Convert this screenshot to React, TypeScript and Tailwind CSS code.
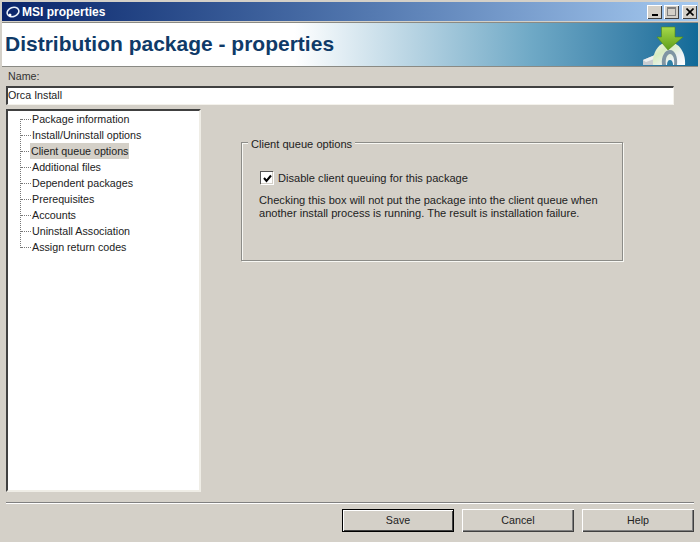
const items = [
  "Package information",
  "Install/Uninstall options",
  "Client queue options",
  "Additional files",
  "Dependent packages",
  "Prerequisites",
  "Accounts",
  "Uninstall Association",
  "Assign return codes",
];

function Btn({ label, primary }: { label: string; primary?: boolean }) {
  return (
    <div
      className={
        primary
          ? "w-[112px] h-[23px] flex items-center justify-center border border-black bg-[#d4d0c8] shadow-[inset_1px_1px_0_#ffffff,inset_-1px_-1px_0_#404040]"
          : "w-[112px] h-[23px] flex items-center justify-center bg-[#d4d0c8] shadow-[inset_1px_1px_0_#ffffff,inset_-1px_-1px_0_#404040,inset_-2px_-2px_0_#808080]"
      }
    >
      <span className="mt-[-1px]">{label}</span>
    </div>
  );
}

function CapBtn({ children }: { children: React.ReactNode }) {
  return (
    <div className="w-[15px] h-[14px] bg-[#d4d0c8] shadow-[inset_1px_1px_0_#ffffff,inset_-1px_-1px_0_#404040] flex items-center justify-center">
      {children}
    </div>
  );
}

function PackageIcon() {
  return (
    <svg width="44" height="40" viewBox="0 0 44 40">
      <defs>
        <linearGradient id="disc" x1="0" y1="0" x2="1" y2="1">
          <stop offset="0" stopColor="#f4f4f0" />
          <stop offset="0.35" stopColor="#d8ecc0" />
          <stop offset="0.7" stopColor="#eef2f4" />
          <stop offset="1" stopColor="#ffffff" />
        </linearGradient>
        <linearGradient id="arr" x1="0" y1="0" x2="0" y2="1">
          <stop offset="0" stopColor="#a6d94a" />
          <stop offset="1" stopColor="#5f9e1a" />
        </linearGradient>
      </defs>
      <path d="M0 34 L12 29 L15 31 L15 39 L0 39 Z" fill="#c8ccd0" />
      <path d="M0 34 L12 29 L14 32 L3 36 Z" fill="#eef0f0" />
      <path d="M10 39 C9 26 16 16 26 16 C36 16 43 27 42 39 Z" fill="url(#disc)" />
      <path d="M19 39 C18 30 22 24 27 24 C32 24 35 31 34 39 L31 39 C32 33 30 28 27 28 C24 28 22 33 23 39 Z" fill="#7f95a3" />
      <path d="M24 39 C24 36 25 34 27 34 C29 34 30 36 30 39 Z" fill="#2f7fa5" />
      <path d="M18.5 1 L32 1 L32 11 L40 11 L25 24 L14 11 L18.5 11 Z" fill="url(#arr)" stroke="#4f8a16" strokeWidth="0.6" />
    </svg>
  );
}

export default function App() {
  return (
    <div className="w-[700px] h-[542px] bg-[#d4d0c8] flex flex-col text-[10.7px] leading-[14px] text-[#222] font-['Liberation_Sans',Arial,sans-serif] overflow-hidden">
      <div className="mt-[2px] mx-[2px] h-[19px] shrink-0 flex items-center justify-between pl-[4px] pr-[1px] bg-gradient-to-r from-[#0a246a] via-[#4f74ac] to-[#a6caf0]">
        <div className="flex items-center gap-[2px] text-white font-bold text-[12px]">
          <svg width="14" height="14" viewBox="0 0 14 14">
            <ellipse cx="7" cy="7" rx="6" ry="4.5" fill="none" stroke="#e8eef8" strokeWidth="1.6" transform="rotate(-20 7 7)" />
            <circle cx="4" cy="10" r="1.5" fill="#ffffff" />
          </svg>
          <span>MSI properties</span>
        </div>
        <div className="flex items-center">
          <CapBtn>
            <div className="w-[6px] h-[2px] bg-black mt-[6px]" />
          </CapBtn>
          <div className="ml-[2px]">
            <CapBtn>
              <div className="w-[9px] h-[9px] border border-[#808080] border-t-2" />
            </CapBtn>
          </div>
          <div className="ml-[3px]">
            <CapBtn>
              <svg width="8" height="8" viewBox="0 0 8 8">
                <path d="M0.5 0.5 L7.5 7.5 M7.5 0.5 L0.5 7.5" stroke="#000" strokeWidth="1.6" />
              </svg>
            </CapBtn>
          </div>
        </div>
      </div>

      <div className="mt-[1px] mx-[2px] h-[45px] shrink-0 flex items-center justify-between border-y border-[#8a8a84] bg-gradient-to-r from-white from-[42%] via-[#6fa9c6] via-[76%] to-[#0f6a98]">
        <span className="ml-[3px] text-[#0f3a68] font-bold text-[21px] leading-[28px] mt-[-2px]">
          Distribution package - properties
        </span>
        <div className="mr-[11px] mt-[2px]">
          <PackageIcon />
        </div>
      </div>

      <div className="ml-[8px] mt-[2px] h-[14px] shrink-0 text-[#333]">Name:</div>

      <div className="ml-[6px] mt-[3px] w-[668px] h-[19px] shrink-0 bg-white flex items-center border-t-2 border-l-2 border-t-[#404040] border-l-[#404040] border-r border-b border-r-[#f4f2ec] border-b-[#f4f2ec]">
        <span className="mt-[-2px]">Orca Install</span>
      </div>

      <div className="flex flex-1 min-h-0 mt-[4px]">
        <div className="ml-[6px] w-[195px] h-[383px] shrink-0 bg-white border-t-2 border-l-2 border-t-[#404040] border-l-[#404040] border-r-2 border-b-2 border-r-[#efede6] border-b-[#efede6] relative">
          <div className="absolute left-[12px] top-[8px] h-[129px] border-l border-dotted border-[#777]" />
          {items.map((t, i) => (
            <div key={t} className="h-4 flex items-center pl-[13px]">
              <div className="w-[10px] border-t border-dotted border-[#777] shrink-0" />
              <span className={i === 2 ? "ml-[-1px] h-[16px] px-[1px] leading-[16px] bg-[#d4d0c8]" : "ml-[1px]"}>{t}</span>
            </div>
          ))}
        </div>

        <div className="ml-[40px] mt-[33px] w-[382px] h-[119px] relative border border-[#8c8c88] shadow-[inset_1px_1px_0_#f8f8f4,1px_1px_0_#f8f8f4] pl-[18px] pt-[28px] text-[11.1px]">
          <div className="absolute left-[6px] top-[-6px] px-[3px] bg-[#d4d0c8]">Client queue options</div>
          <div className="flex items-center h-[14px]">
            <div className="w-[13px] h-[13px] mt-[-1px] bg-white border-t border-l border-t-[#555] border-l-[#555] shadow-[inset_-1px_-1px_0_#d4d0c8,1px_1px_0_#fff] flex items-center justify-center">
              <svg width="9" height="9" viewBox="0 0 9 9">
                <path d="M1 4 L3.5 7 L8 1.5" fill="none" stroke="#000" strokeWidth="2" />
              </svg>
            </div>
            <span className="ml-[5px]">Disable client queuing for this package</span>
          </div>
          <p className="mt-[9px] leading-[13px] w-[362px] ml-[-1px]">
            Checking this box will not put the package into the client queue when another install process is running. The result is installation failure.
          </p>
        </div>
      </div>

      <div className="mx-[6px] h-[2px] shrink-0 bg-[#808080] border-b border-white" />

      <div className="flex justify-end gap-2 pr-[6px] mt-[5px] mb-[10px] shrink-0">
        <Btn label="Save" primary />
        <Btn label="Cancel" />
        <Btn label="Help" />
      </div>
    </div>
  );
}
